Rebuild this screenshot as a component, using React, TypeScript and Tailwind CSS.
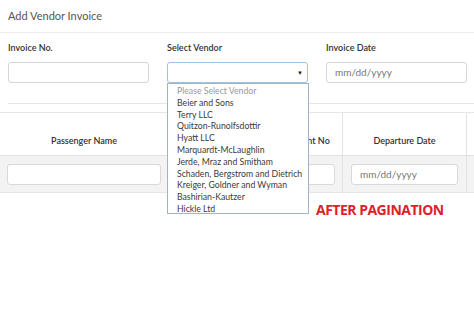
import React from "react";

const vendors = [
  "Beier and Sons",
  "Terry LLC",
  "Quitzon-Runolfsdottir",
  "Hyatt LLC",
  "Marquardt-McLaughlin",
  "Jerde, Mraz and Smitham",
  "Schaden, Bergstrom and Dietrich",
  "Kreiger, Goldner and Wyman",
  "Bashirian-Kautzer",
  "Hickle Ltd",
];

export default function App() {
  return (
    <div
      className="relative w-[474px] h-[310px] overflow-hidden bg-white text-[#333]"
      style={{ fontFamily: "Lato, 'Open Sans', sans-serif" }}
    >
      <div className="h-[33px] px-2 flex items-center border-b border-[#ececec] text-[11px] text-[#555]">
        Add Vendor Invoice
      </div>

      <div className="grid grid-cols-[141px_141px_141px] gap-x-[18px] px-2 pt-[8px]">
        {["Invoice No.", "Select Vendor", "Invoice Date"].map((l) => (
          <div key={l} className="h-[14px] text-[9px] font-semibold leading-[14px] text-[#333]">
            {l}
          </div>
        ))}
        <div className="mt-[7px] h-[21px] rounded-[3px] border border-[#d6d6d6] bg-white" />
        <div className="mt-[7px] h-[21px] rounded-[3px] border border-[#9fc3e6] bg-white flex items-center justify-end pr-[4px]">
          <span className="text-[6px] text-[#222]">▼</span>
        </div>
        <div className="mt-[7px] h-[21px] rounded-[3px] border border-[#d6d6d6] bg-white flex items-center pl-[8px] text-[10px] text-[#777]">
          mm/dd/yyyy
        </div>
      </div>

      <div className="ml-2 mt-[20px] border-t border-[#e6e6e6]" />

      <div className="mt-[8px] border-t border-[#e6e6e6]">
        <div className="flex h-[43px] border-b border-[#e2e2e2]">
          <div className="w-[168px] flex items-center justify-center pt-[14px] text-[9px] font-semibold text-[#333]">
            Passenger Name
          </div>
          <div className="w-[113px]" />
          <div className="w-[62px] border-r border-[#e2e2e2] flex items-center justify-center pt-[14px] text-[9px] font-semibold">
            Flight No
          </div>
          <div className="w-[124px] border-r border-[#e2e2e2] flex items-center justify-center pt-[14px] text-[9px] font-semibold">
            Departure Date
          </div>
          <div className="flex-1" />
        </div>
        <div className="flex h-[37px] bg-[#f3f3f3] border-b border-[#e6e6e6]">
          <div className="w-[168px] flex items-center pl-[7px] pr-[7px]">
            <div className="w-full h-[21px] rounded-[3px] border border-[#dadada] bg-white" />
          </div>
          <div className="w-[113px]" />
          <div className="w-[62px] border-r border-[#e2e2e2] flex items-center pl-[7px] pr-[7px]">
            <div className="w-full h-[21px] rounded-[3px] border border-[#dadada] bg-white" />
          </div>
          <div className="w-[124px] border-r border-[#e2e2e2] flex items-center pl-[8px] pr-[8px]">
            <div className="w-full h-[21px] rounded-[3px] border border-[#dadada] bg-white flex items-center pl-[8px] text-[10px] text-[#777]">
              mm/dd/yyyy
            </div>
          </div>
          <div className="flex-1" />
        </div>
      </div>

      <div
        className="absolute left-[316px] top-[201px] text-[14px] tracking-[-0.5px] font-bold text-[#e0202a] leading-[18px]"
        style={{ fontFamily: "'Open Sans', sans-serif" }}
      >
        AFTER PAGINATION
      </div>

      <div className="absolute left-[167px] top-[83px] w-[142px] h-[131px] border border-[#9fb3c8] bg-white pt-[1px] pl-[9px] text-[8.7px] leading-[11.8px] text-[#3a3a3a]">
        <div className="text-[#999]">Please Select Vendor</div>
        {vendors.map((v) => (
          <div key={v} className="whitespace-nowrap">
            {v}
          </div>
        ))}
      </div>
    </div>
  );
}
